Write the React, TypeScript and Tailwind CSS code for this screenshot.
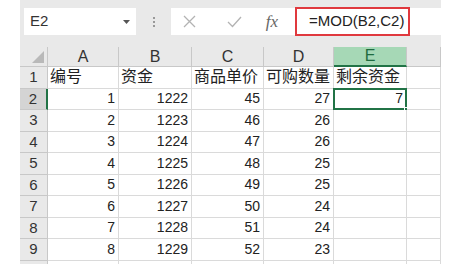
import React from "react";

const cols = [28, 71, 73, 72, 70, 73, 34];
const letters = ["A", "B", "C", "D", "E", ""];

const rows: (string | number)[][] = [
  ["编号", "资金", "商品单价", "可购数量", "剩余资金", ""],
  [1, 1222, 45, 27, 7, ""],
  [2, 1223, 46, 26, "", ""],
  [3, 1224, 47, 26, "", ""],
  [4, 1225, 48, 25, "", ""],
  [5, 1226, 49, 25, "", ""],
  [6, 1227, 50, 24, "", ""],
  [7, 1228, 51, 24, "", ""],
  [8, 1229, 52, 23, "", ""],
  ["", "", "", "", "", ""],
];

const font = { fontFamily: '"Liberation Sans", "Noto Sans CJK SC", sans-serif' };

export default function App() {
  return (
    <div className="w-[474px] h-[264px] bg-white overflow-hidden pl-[20px]" style={font}>
      <div className="w-[421px] h-[264px] bg-[#e9e9e9] flex flex-col">
        {/* toolbar */}
        <div className="h-[47px] shrink-0 flex items-start pt-[8px]">
          <div className="ml-[4px] w-[112px] h-[27px] bg-white flex items-center justify-between pl-[6px] pr-[6px]">
            <span className="text-[15px] text-[#333]">E2</span>
            <svg width="7" height="4" viewBox="0 0 7 4">
              <path d="M0 0 L7 0 L3.5 4 Z" fill="#555" />
            </svg>
          </div>
          <div className="w-[35px] h-[27px] flex items-center justify-center">
            <div className="flex flex-col gap-[2px]">
              <div className="w-[2px] h-[2px] bg-[#999]" />
              <div className="w-[2px] h-[2px] bg-[#999]" />
              <div className="w-[2px] h-[2px] bg-[#999]" />
            </div>
          </div>
          <div className="flex-1 h-[27px] bg-white flex items-center">
            <div className="w-[37px] flex justify-center">
              <svg width="13" height="13" viewBox="0 0 13 13">
                <path d="M1 1 L12 12 M12 1 L1 12" stroke="#b3b3b3" strokeWidth="1.3" />
              </svg>
            </div>
            <div className="w-[52px] flex justify-center">
              <svg width="15" height="12" viewBox="0 0 15 12">
                <path d="M1 6 L5.5 10.5 L14 1" stroke="#b3b3b3" strokeWidth="1.3" fill="none" />
              </svg>
            </div>
            <div className="w-[24px] flex justify-center">
              <span
                className="text-[17px] italic text-[#666]"
                style={{ fontFamily: '"Liberation Serif", serif' }}
              >
                fx
              </span>
            </div>
            <div className="ml-[11px] w-[115px] h-[29px] -mt-[1px] border-2 border-[#e0393e] flex items-center pl-[12px]">
              <span className="text-[15px] text-[#222]">=MOD(B2,C2)</span>
            </div>
          </div>
        </div>
        {/* header row */}
        <div className="flex h-[20px] shrink-0">
          <div
            className="h-full border-r border-b border-[#c8c8c8] flex items-end justify-end pr-[3px] pb-[3px]"
            style={{ width: cols[0] }}
          >
            <svg width="12" height="12" viewBox="0 0 12 12">
              <path d="M12 0 L12 12 L0 12 Z" fill="#b9b9b9" />
            </svg>
          </div>
          {letters.map((l, i) => {
            const sel = l === "E";
            return (
              <div
                key={i}
                className={
                  sel
                    ? "h-full bg-[#a6d8b6] border-r border-b-2 border-[#c8c8c8] border-b-[#217346] flex items-center justify-center text-[16px] text-[#1e6b3f]"
                    : "h-full border-r border-b border-[#c8c8c8] flex items-center justify-center text-[16px] text-[#333]"
                }
                style={{ width: cols[i + 1] }}
              >
                {l}
              </div>
            );
          })}
        </div>
        {/* data rows */}
        {rows.map((r, ri) => (
          <div key={ri} className="flex h-[21.5px] shrink-0">
            <div
              className={
                ri === 1
                  ? "h-full bg-[#d4d4d4] border-r-2 border-r-[#217346] border-b border-b-[#c8c8c8] flex items-center justify-center text-[15px] text-[#333]"
                  : "h-full border-r border-b border-[#c8c8c8] flex items-center justify-center text-[15px] text-[#333]"
              }
              style={{ width: cols[0] }}
            >
              {ri < 9 ? ri + 1 : ""}
            </div>
            {r.map((v, ci) => {
              const isText = typeof v === "string" && v !== "";
              const sel = ri === 1 && ci === 4;
              return (
                <div
                  key={ci}
                  className={
                    "relative h-full bg-white border-r border-b border-[#dadada] flex items-center " +
                    (isText ? "justify-start pl-[2px] text-[16px] text-[#222]" : "justify-end pr-[3px] text-[14px] text-[#222]")
                  }
                  style={{ width: cols[ci + 1] }}
                >
                  {v}
                  {sel && (
                    <>
                      <div className="absolute -left-[1px] -top-[1px] -right-[1px] -bottom-[1px] border-2 border-[#217346]" />
                      <div className="absolute -right-[3px] -bottom-[3px] w-[5px] h-[5px] bg-[#217346] border border-white" />
                    </>
                  )}
                </div>
              );
            })}
          </div>
        ))}
      </div>
    </div>
  );
}
